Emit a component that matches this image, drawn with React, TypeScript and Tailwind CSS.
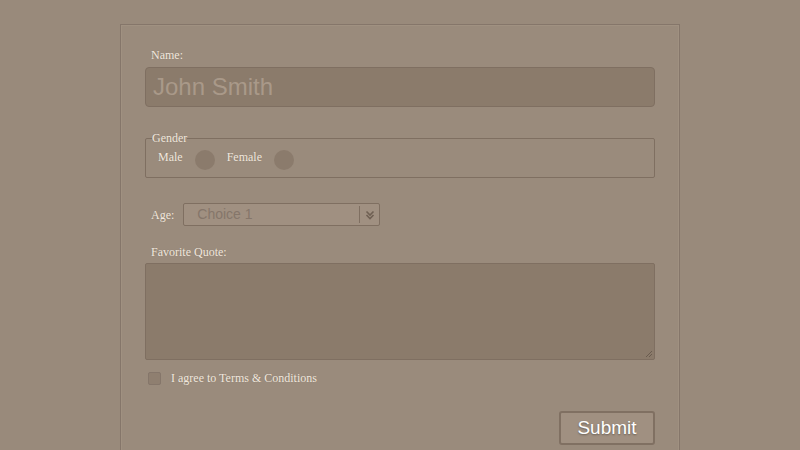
import React from 'react';

const labelCls = "font-['Liberation_Serif',serif] text-[12px] leading-[16px] text-[#f1e7dd] [text-shadow:0_0_1px_rgba(0,0,0,0.15)]";

export default function App() {
  return (
    <div className="min-h-[450px] h-[450px] overflow-hidden bg-[#998a7b]">
      <form className="mx-auto mt-[24px] w-[560px] h-[440px] border border-[#85766a] bg-[#9a8b7c] shadow-[inset_0_0_0_1px_#a09181] pl-[24px] pr-[24px]">
        {/* name */}
        <label className={`${labelCls} block mt-[22px] ml-[6px]`}>Name:</label>
        <div className="mt-[4px] h-[40px] rounded-[4px] border border-[#7f6f61] bg-[#8b7b6b] flex items-center px-[7px]">
          <span className="font-['Liberation_Sans',sans-serif] text-[24px] text-[#a99989]">John Smith</span>
        </div>

        {/* gender */}
        <fieldset className="mt-[24px] h-[47px] rounded-[2px] border border-[#7f6f61] px-[12px]">
          <legend className={`${labelCls} ml-[-6px] !leading-[14px]`}>Gender</legend>
          <div className="flex items-start mt-[4px]">
            <span className={labelCls}>Male</span>
            <span className="mt-[1px] ml-[12px] w-[20px] h-[20px] rounded-full bg-[#8b7b6c]" />
            <span className={`${labelCls} ml-[12px]`}>Female</span>
            <span className="mt-[1px] ml-[12px] w-[20px] h-[20px] rounded-full bg-[#8b7b6c]" />
          </div>
        </fieldset>

        {/* age */}
        <div className="mt-[25px] flex items-center">
          <span className={`${labelCls} ml-[6px]`}>Age:</span>
          <div className="ml-[9px] w-[197px] h-[23px] rounded-[2px] border border-[#7f6f61] bg-[#a09081] flex items-center">
            <span className="flex-1 pl-[13px] font-['Liberation_Sans',sans-serif] text-[14px] text-[#85766a]">Choice 1</span>
            <span className="w-[20px] h-[17px] border-l border-[#7f6f61] flex items-center justify-center">
              <svg width="10" height="10" viewBox="0 0 10 10" fill="none" stroke="#6f6053" strokeWidth="1.6">
                <path d="M1.5 1.5 L5 5 L8.5 1.5" />
                <path d="M1.5 5 L5 8.5 L8.5 5" />
              </svg>
            </span>
          </div>
        </div>

        {/* quote */}
        <label className={`${labelCls} block mt-[18px] ml-[6px]`}>Favorite Quote:</label>
        <div className="relative mt-[3px] h-[97px] rounded-[2px] border border-[#7f6f61] bg-[#8b7b6b]">
          <svg className="absolute right-[1px] bottom-[1px]" width="8" height="8" viewBox="0 0 8 8" stroke="#6a5c4f" strokeWidth="1">
            <path d="M7 1 L1 7 M7 4 L4 7" />
          </svg>
        </div>

        {/* terms */}
        <div className="mt-[10px] flex items-center">
          <span className="ml-[3px] w-[13px] h-[13px] rounded-[2px] border border-[#85766a] bg-[#8f7f70]" />
          <span className={`${labelCls} ml-[10px]`}>I agree to Terms &amp; Conditions</span>
        </div>

        <div className="mt-[25px] flex justify-end">
          <button type="button" className="w-[96px] h-[34px] rounded-[3px] border-2 border-[#807062] bg-[#a09081] font-['Liberation_Sans',sans-serif] text-[19px] text-white [text-shadow:0_1px_2px_rgba(0,0,0,0.35)]">
            Submit
          </button>
        </div>
      </form>
    </div>
  );
}
